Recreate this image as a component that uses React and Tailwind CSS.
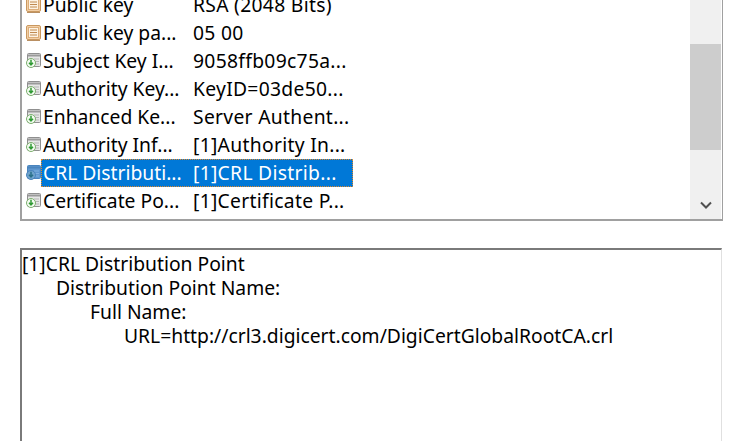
import React from "react";

const fields = [
  { name: "Public key", value: "RSA (2048 Bits)", icon: "cert" },
  { name: "Public key pa...", value: "05 00", icon: "cert" },
  { name: "Subject Key I...", value: "9058ffb09c75a...", icon: "ext" },
  { name: "Authority Key...", value: "KeyID=03de50...", icon: "ext" },
  { name: "Enhanced Ke...", value: "Server Authent...", icon: "ext" },
  { name: "Authority Inf...", value: "[1]Authority In...", icon: "ext" },
  { name: "CRL Distributi...", value: "[1]CRL Distrib...", icon: "ext", selected: true },
  { name: "Certificate Po...", value: "[1]Certificate P...", icon: "ext" },
];

function CertIcon() {
  return (
    <svg width="15" height="17" viewBox="0 0 15 17" className="shrink-0">
      <rect x="0.5" y="0.5" width="14" height="14" rx="1.5" fill="#f3cfa6" stroke="#c9985f" />
      <rect x="2.5" y="2.5" width="10" height="10" fill="#fdf3e3" stroke="#dcae7a" />
      <path d="M4 5h7M4 7.5h7M4 10h7" stroke="#c08a50" strokeWidth="1" />
      <path d="M1 15.5h13" stroke="#b98f62" strokeWidth="1" />
    </svg>
  );
}

function ExtIcon({ selected }) {
  const tint = selected;
  return (
    <svg width="15" height="16" viewBox="0 0 15 16" className="shrink-0">
      <rect x="1.5" y="0.5" width="13" height="13" rx="1" fill={tint ? "#5f97cf" : "#e6e6e6"} stroke={tint ? "#4a84bd" : "#8f8f8f"} />
      <path d="M2 2.5h12" stroke={tint ? "#4a84bd" : "#9a9a9a"} strokeWidth="2" />
      <path d="M8 6h5M9 8.5h4M9 11h4" stroke={tint ? "#7fb0de" : "#b5b5b5"} />
      <circle cx="5" cy="10" r="4.5" fill={tint ? "#6fa3cc" : "#f4fbf1"} stroke={tint ? "#4a84bd" : "#7cae6e"} />
      <path d="M5 6.8v5M3 9.8l2 2.2 2-2.2" fill="none" stroke={tint ? "#2a7088" : "#2f9a34"} strokeWidth="1.5" />
    </svg>
  );
}

function FieldRow({ field }) {
  const sel = field.selected;
  return (
    <div className="flex h-[28px] items-center">
      <div className="flex w-[18px] shrink-0 justify-start pl-[3px]">
        {field.icon === "cert" ? <CertIcon /> : <ExtIcon selected={sel} />}
      </div>
      <div
        className={
          sel
            ? "flex h-[28px] w-[312px] items-center border border-dotted border-[#e0882c] bg-[#0078d7] text-white"
            : "flex h-[28px] w-[312px] items-center border border-transparent text-black"
        }
      >
        <span className="w-[151px] pl-[1px] whitespace-nowrap">{field.name}</span>
        <span className="tracking-[0.3px] whitespace-nowrap">{field.value}</span>
      </div>
    </div>
  );
}

export default function App() {
  return (
    <div className="h-[441px] w-[743px] overflow-hidden bg-white px-[20px] font-['Noto_Sans','Open_Sans',sans-serif] text-[19.3px] leading-[24px] text-black">
      <div className="mt-[-30px] flex h-[251px] w-[703px] border-r border-b-2 border-l-2 border-[#a0a0a0]">
        <div className="flex-1 pt-[21px] pl-[1px]">
          {fields.map((f) => (
            <FieldRow key={f.name} field={f} />
          ))}
        </div>
        <div className="mr-[1px] flex w-[31px] flex-col bg-[#f0f0f0] pt-[74px]">
          <div className="h-[106px] bg-[#cdcdcd]" />
          <div className="flex flex-1 items-end justify-center pb-[9px]">
            <svg width="12" height="9" viewBox="0 0 12 9">
              <path d="M1 1.5l5 5 5-5" fill="none" stroke="#505050" strokeWidth="2" />
            </svg>
          </div>
        </div>
      </div>
      <div className="mt-[27px] h-[221px] w-[702px] border-t-2 border-r border-l-2 border-t-[#7a7a7a] border-r-[#e0e0e0] border-l-[#7a7a7a] pt-[2px]">
        <div>[1]CRL Distribution Point</div>
        <div className="pl-[34px]">Distribution Point Name:</div>
        <div className="pl-[68px]">Full Name:</div>
        <div className="pl-[102px]">URL=http://crl3.digicert.com/DigiCertGlobalRootCA.crl</div>
      </div>
    </div>
  );
}
